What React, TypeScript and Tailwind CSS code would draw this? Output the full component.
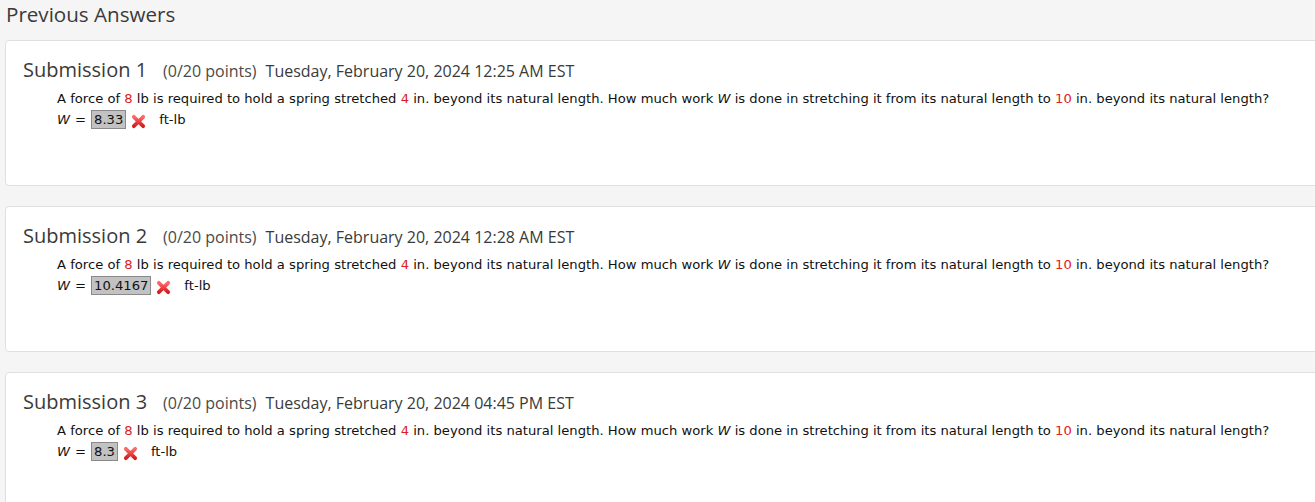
import React from "react";

type Submission = {
  n: number;
  date: string;
  answer: string;
};

const submissions: Submission[] = [
  { n: 1, date: "Tuesday, February 20, 2024 12:25 AM EST", answer: "8.33" },
  { n: 2, date: "Tuesday, February 20, 2024 12:28 AM EST", answer: "10.4167" },
  { n: 3, date: "Tuesday, February 20, 2024 04:45 PM EST", answer: "8.3" },
];

function WrongMark() {
  return (
    <svg width="15" height="15" viewBox="0 0 16 16" className="inline-block">
      <defs>
        <linearGradient id="xg" x1="0" y1="0" x2="0" y2="1">
          <stop offset="0" stopColor="#ff6b6b" />
          <stop offset="1" stopColor="#d41d1d" />
        </linearGradient>
      </defs>
      <path
        d="M3 3 L13 13 M13 3 L3 13"
        stroke="url(#xg)"
        strokeWidth="4"
        strokeLinecap="round"
      />
    </svg>
  );
}

function Red({ children }: { children: React.ReactNode }) {
  return <span className="text-[#dd2222]">{children}</span>;
}

function SubmissionCard({ s }: { s: Submission }) {
  return (
    <div className="h-[146px] rounded-[4px] border border-[#dfdfdf] bg-white pl-[17px] pt-[14px]">
      <div className="flex items-baseline font-['Open_Sans',sans-serif] text-[#3a3a3a]">
        <span className="text-[20px]">Submission {s.n}</span>
        <span className="ml-[16px] text-[16px] text-[#4a4a4a]">(0/20 points)</span>
        <span className="ml-[9px] text-[16px]">{s.date}</span>
      </div>
      <div className="ml-[34px] mt-[3px] font-['DejaVu_Sans',Verdana,sans-serif] text-[13.15px] leading-[21px] text-[#111]">
        <div>
          A force of <Red>8</Red> lb is required to hold a spring stretched <Red>4</Red> in. beyond its
          natural length. How much work <i>W</i> is done in stretching it from its natural length to{" "}
          <Red>10</Red> in. beyond its natural length?
        </div>
        <div className="flex items-center">
          <i>W</i>
          <span className="ml-[5px]">=</span>
          <span className="ml-[5px] border border-[#8a8a8a] bg-[#c2c2c2] px-[2px] leading-[17px]">
            {s.answer}
          </span>
          <span className="ml-[5px] mt-[3px] flex">
            <WrongMark />
          </span>
          <span className="ml-[13px]">ft-lb</span>
        </div>
      </div>
    </div>
  );
}

export default function App() {
  return (
    <div className="h-[502px] overflow-hidden bg-[#f5f5f5] pl-[5px] pt-[1px]">
      <h2 className="pl-[1px] font-['Open_Sans',sans-serif] text-[20.6px] leading-[27px] text-[#3a3a3a]">
        Previous Answers
      </h2>
      <div className="-mr-[20px] mt-[12px] flex flex-col gap-[20px]">
        {submissions.map((s) => (
          <SubmissionCard key={s.n} s={s} />
        ))}
      </div>
    </div>
  );
}
